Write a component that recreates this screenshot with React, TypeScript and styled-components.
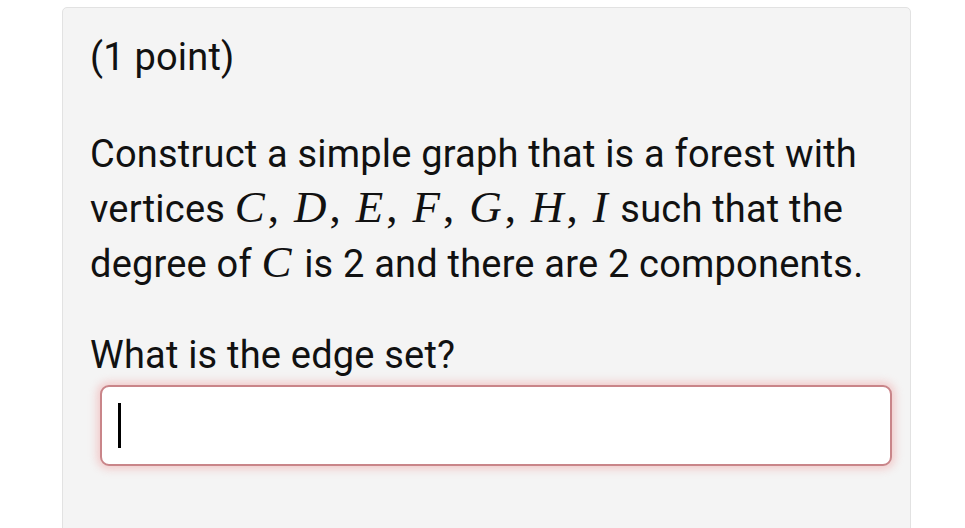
import React from "react";
import styled, { createGlobalStyle } from "styled-components";

const GlobalStyle = createGlobalStyle`
  html, body {
    margin: 0;
    padding: 0;
    background: #ffffff;
  }
  body {
    font-family: Roboto, "Liberation Sans", sans-serif;
    color: #111111;
  }
`;

const Page = styled.div`
  width: 965px;
  height: 528px;
  overflow: hidden;
  padding: 7px 0 0 62px;
  box-sizing: border-box;
`;

const Problem = styled.div`
  width: 849px;
  height: 560px;
  box-sizing: border-box;
  background: #f4f4f4;
  border: 1px solid #e2e2e2;
  border-radius: 5px;
  padding: 22px 0 0 27px;
  font-size: 38px;
  line-height: 55px;
  letter-spacing: 0.2px;
`;

const Paragraph = styled.p<{ $gap?: number }>`
  margin: 0 0 ${(p) => p.$gap ?? 0}px 0;
`;

const Math = styled.span`
  white-space: nowrap;
  font-family: "Liberation Serif", "DejaVu Serif", serif;
  font-size: 45px;
  line-height: 1;
  letter-spacing: 0;
`;

const V = styled.i`
  font-style: italic;
  padding-right: 3px;
`;

const Comma = styled.span`
  margin-right: 15px;
`;

const AnswerBox = styled.div`
  margin: 2px 0 0 10px;
  width: 792px;
  height: 81px;
  box-sizing: border-box;
  background: #ffffff;
  border: 2px solid #c98589;
  border-radius: 9px;
  box-shadow: 0 0 8px 3px rgba(240, 150, 150, 0.45);
  display: flex;
  align-items: center;
  padding-left: 16px;
`;

const Caret = styled.div`
  width: 3px;
  height: 45px;
  background: #000000;
`;

const vertices = ["C", "D", "E", "F", "G", "H", "I"];

export default function App() {
  return (
    <>
      <GlobalStyle />
      <Page>
        <Problem>
          <Paragraph $gap={42}>(1 point)</Paragraph>
          <Paragraph $gap={36}>
            Construct a simple graph that is a forest with vertices{" "}
            <Math>
              {vertices.map((v, i) => (
                <React.Fragment key={v}>
                  <V>{v}</V>
                  {i < vertices.length - 1 ? <Comma>,</Comma> : null}
                </React.Fragment>
              ))}
            </Math>{" "}
            such that the degree of{" "}
            <Math>
              <V>C</V>
            </Math>{" "}
            is 2 and there are 2 components.
          </Paragraph>
          <Paragraph>What is the edge set?</Paragraph>
          <AnswerBox>
            <Caret />
          </AnswerBox>
        </Problem>
      </Page>
    </>
  );
}
